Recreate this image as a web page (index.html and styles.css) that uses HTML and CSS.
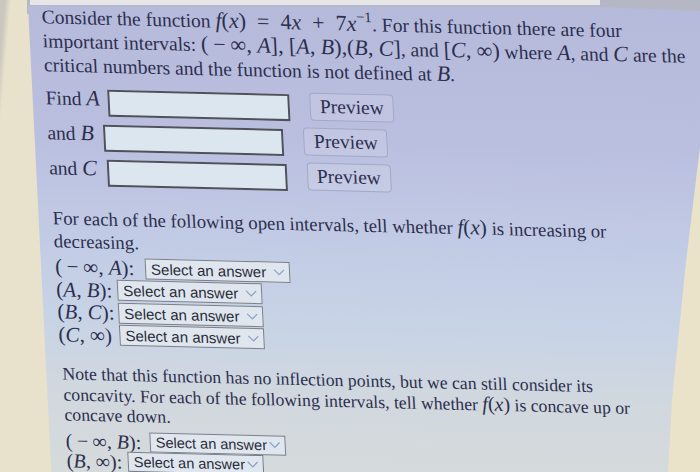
FILE: index.html
```html
<!DOCTYPE html>
<html lang="en">
<head>
<meta charset="utf-8">
<title>Function intervals</title>
<link rel="stylesheet" href="styles.css">
</head>
<body>
<div class="screen">
  <div class="panel">
    <p class="intro">Consider the function <span class="m"><i>f</i>(<i>x</i>)<span class="rel">=</span>4<i>x</i><span class="bin">+</span>7<i>x</i><sup class="sup">−1</sup></span>. For this function there are four<br>important intervals: <span class="m">(<span class="op">−</span>∞, <i>A</i>], [<i>A</i>, <i>B</i>),(<i>B</i>, <i>C</i>]</span>, and <span class="m">[<i>C</i>, ∞)</span> where <span class="m"><i>A</i></span>, and <span class="m"><i>C</i></span> are the<br>critical numbers and the function is not defined at <span class="m"><i>B</i></span>.</p>

    <div class="rows">
      <div class="row">
        <span class="row-label">Find <span class="m"><i>A</i></span></span>
        <span class="field field-wide"></span>
        <span class="preview">Preview</span>
      </div>
      <div class="row">
        <span class="row-label">and <span class="m"><i>B</i></span></span>
        <span class="field"></span>
        <span class="preview">Preview</span>
      </div>
      <div class="row">
        <span class="row-label">and <span class="m"><i>C</i></span></span>
        <span class="field"></span>
        <span class="preview">Preview</span>
      </div>
    </div>

    <div class="sec2">
      <p class="para">For each of the following open intervals, tell whether <span class="m"><i>f</i>(<i>x</i>)</span> is increasing or<br>decreasing.</p>
      <div class="srows">
        <div class="srow"><span class="lbl lbl-long">(<span class="op">−</span>∞, <i>A</i>):</span><span class="select"><span>Select an answer</span><svg class="chev" width="12" height="7" viewBox="0 0 12 7"><polyline points="1,1 6,6 11,1"/></svg></span></div>
        <div class="srow"><span class="lbl lbl-short">(<i>A</i>, <i>B</i>):</span><span class="select"><span>Select an answer</span><svg class="chev" width="12" height="7" viewBox="0 0 12 7"><polyline points="1,1 6,6 11,1"/></svg></span></div>
        <div class="srow"><span class="lbl lbl-short">(<i>B</i>, <i>C</i>):</span><span class="select"><span>Select an answer</span><svg class="chev" width="12" height="7" viewBox="0 0 12 7"><polyline points="1,1 6,6 11,1"/></svg></span></div>
        <div class="srow"><span class="lbl lbl-short">(<i>C</i>, ∞)</span><span class="select"><span>Select an answer</span><svg class="chev" width="12" height="7" viewBox="0 0 12 7"><polyline points="1,1 6,6 11,1"/></svg></span></div>
      </div>
    </div>

    <div class="sec3">
      <p class="para">Note that this function has no inflection points, but we can still consider its<br>concavity. For each of the following intervals, tell whether <span class="m"><i>f</i>(<i>x</i>)</span> is concave up or<br>concave down.</p>
      <div class="srows srows-small">
        <div class="srow"><span class="lbl lbl-long3">(<span class="op">−</span>∞, <i>B</i>):</span><span class="select select-small"><span>Select an answer</span><svg class="chev" width="12" height="7" viewBox="0 0 12 7"><polyline points="1,1 6,6 11,1"/></svg></span></div>
        <div class="srow"><span class="lbl lbl-short3">(<i>B</i>, ∞):</span><span class="select select-small"><span>Select an answer</span><svg class="chev" width="12" height="7" viewBox="0 0 12 7"><polyline points="1,1 6,6 11,1"/></svg></span></div>
      </div>
    </div>
  </div>
</div>
</body>
</html>
```

FILE: styles.css
```css
html, body {
  margin: 0;
  padding: 0;
}

body {
  width: 700px;
  height: 472px;
  overflow: hidden;
  font-family: "Liberation Serif", "Times New Roman", serif;
  background:
    linear-gradient(#e6e5e8, #e6e5e8) 30px 0 / 570px 5px no-repeat,
    linear-gradient(#b6b7c5, #b6b7c5) 27px 0 / 673px 14px no-repeat,
    linear-gradient(95deg, #cbc7bf 0, #cbc7bf 5px, #e8e1cb 11px, #ebe2ca 100%);
}

.screen {
  height: 472px;
  overflow: hidden;
  clip-path: polygon(27px 6px, 600px 7px, 700px 11px, 700px 147px, 686px 262px, 672px 400px, 668px 472px, 0 472px, 0 6px);
}

.panel {
  margin: -15px 0 0 27px;
  width: 720px;
  height: 520px;
  box-sizing: border-box;
  padding: 20px 0 0 13px;
  transform: matrix(1, 0.024, 0.05, 1, 0, 0);
  transform-origin: 0 0;
  color: #2d2f4e;
  background: linear-gradient(180deg, #b5b9da 0px, #babfdf 150px, #c2cbe5 250px, #c7d3e6 330px, #d1d8de 410px, #d7dbd9 520px);
}

.intro {
  margin: 0;
  font-size: 19.5px;
  line-height: 24px;
  white-space: nowrap;
}

.m {
  font-size: 1.13em;
  line-height: 0;
}

.rel,
.bin {
  padding: 0 0.5em;
}

.sup {
  font-size: 0.66em;
  line-height: 0;
  vertical-align: 0.62em;
}

.op {
  padding: 0 0.22em;
}

.rows {
  margin-top: 9px;
  display: flex;
  flex-direction: column;
  gap: 6px;
}

.row {
  display: flex;
  align-items: flex-start;
  height: 29px;
}

.row-label {
  font-size: 19.5px;
  line-height: 24px;
}

.field {
  margin: 2px 0 0 10px;
  width: 180px;
  height: 27px;
  box-sizing: border-box;
  border: 2px solid #4f515c;
  background: #dbe6ee;
}

.field-wide {
  margin-left: 8px;
  width: 182px;
}

.preview {
  margin-left: 20px;
  height: 28px;
  box-sizing: border-box;
  padding: 0 9px;
  border: 1px solid #a2a9c6;
  border-radius: 4px;
  background: rgba(255, 255, 255, 0.12);
  font-size: 19.5px;
  line-height: 25px;
}

.sec2 {
  margin-top: 22px;
  padding-left: 1px;
}

.para {
  margin: 0;
  font-size: 18.8px;
  line-height: 22.5px;
  white-space: nowrap;
}

.srows {
  margin-top: 3px;
  display: flex;
  flex-direction: column;
}

.srow {
  display: flex;
  align-items: center;
  height: 22.5px;
}

.lbl {
  font-size: 21px;
  line-height: 22px;
  white-space: nowrap;
  flex: none;
}

.lbl-long { width: 90px; }
.lbl-short { width: 61px; }

.select {
  display: flex;
  align-items: center;
  justify-content: space-between;
  width: 145px;
  height: 21px;
  box-sizing: border-box;
  padding: 0 4px 0 5px;
  border: 1px solid #7a7e8a;
  background: #dfe6ed;
  font-family: "Liberation Sans", Arial, sans-serif;
  font-size: 15px;
  color: #2a2c3a;
}

.chev {
  flex: none;
}

.chev polyline {
  fill: none;
  stroke: #8aa0c4;
  stroke-width: 1.2;
}

.sec3 {
  margin-top: 18px;
  padding-left: 3px;
}

.sec3 .para {
  font-size: 17.7px;
  line-height: 20.5px;
}

.srows-small {
  margin-top: 5px;
}

.srows-small .srow {
  height: 20px;
}

.srows-small .lbl {
  font-size: 20px;
}

.lbl-long3 { width: 84px; }
.lbl-short3 { width: 61px; }

.select-small {
  width: 136px;
  height: 20px;
  font-size: 14.5px;
}
```
